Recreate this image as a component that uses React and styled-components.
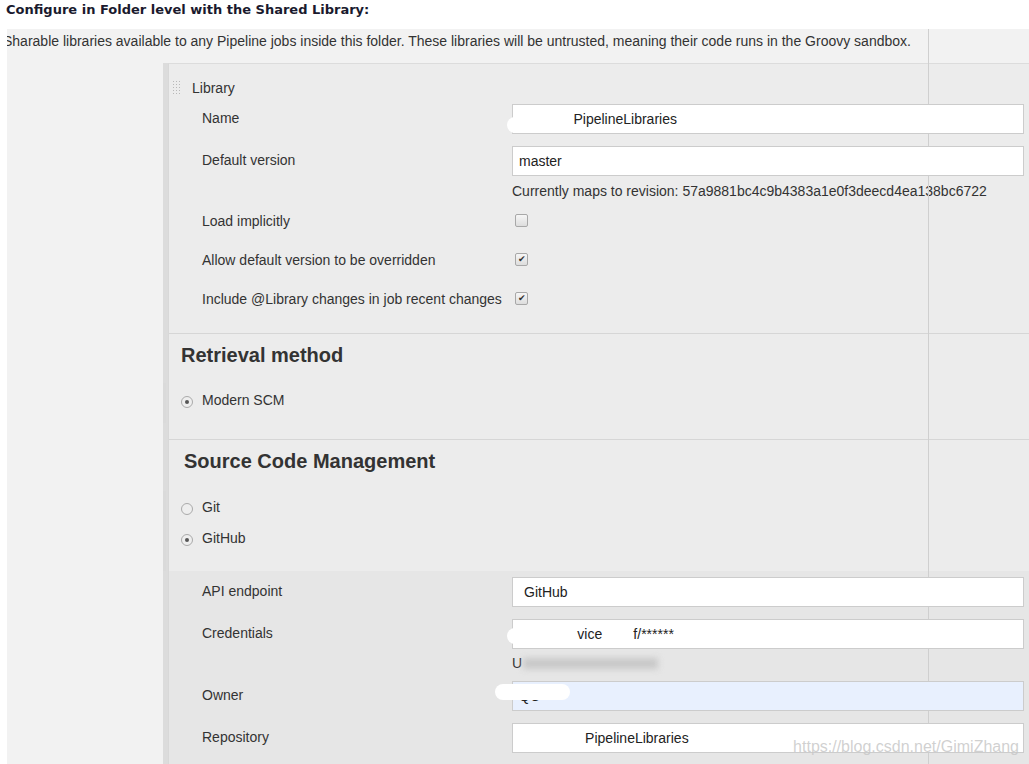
import React from 'react';
import styled, { createGlobalStyle } from 'styled-components';

const Global = createGlobalStyle`
  body { margin: 0; background: #fff; font-family: "Liberation Sans", Arial, sans-serif; color: #333; }
`;

const Title = styled.div`
  height: 29px;
  box-sizing: border-box;
  padding: 2px 0 0 6px;
  font: bold 13px "DejaVu Sans", Verdana, sans-serif;
  color: #1a1a2e;
`;

const Panel = styled.div`
  position: relative;
  margin-left: 7px;
  height: 735px;
  overflow: hidden;
  background: #f2f2f2;
`;

const Desc = styled.div`
  height: 34px;
  box-sizing: border-box;
  padding-top: 4px;
  margin-left: -4px;
  font-size: 14px;
  color: #333;
  white-space: nowrap;
`;

const VLine = styled.div`
  position: absolute;
  left: 921px;
  top: 0;
  bottom: 0;
  width: 1px;
  background: #cfcfcf;
`;

const Body = styled.div`
  display: flex;
  padding-left: 156px;
`;

const Bar = styled.div`
  width: 5px;
  background: #dcdcdc;
`;

const Inner = styled.div`
  flex: 1;
  background: #ececec;
  border-top: 1px solid #dcdcdc;
  border-left: 1px solid #d8d8d8;
  height: 700px;
`;

const LibHeader = styled.div`
  height: 40px;
  display: flex;
  align-items: center;
  gap: 11px;
  padding: 8px 0 0 3px;
  box-sizing: border-box;
  font-size: 14px;
`;

const Handle = styled.div`
  width: 9px;
  height: 16px;
  background-image: radial-gradient(circle, #b8b8b8 0.7px, transparent 0.8px);
  background-size: 3px 3px;
`;

const Row = styled.div`
  display: grid;
  grid-template-columns: 310px 1fr;
  align-items: ${p => (p.$center ? 'center' : 'start')};
  height: ${p => p.$h}px;
  padding: 0 5px 0 33px;
  font-size: 14px;
`;

const Label = styled.div`
  padding-top: ${p => (p.$top ? 6 : 0)}px;
`;

const Input = styled.div`
  position: relative;
  height: 30px;
  box-sizing: border-box;
  border: 1px solid #ccc;
  background: ${p => (p.$auto ? '#e8f0fe' : '#fff')};
  font-size: 14px;
  color: #222;
  padding: 0 0 0 ${p => p.$pad || 6}px;
  display: flex;
  align-items: center;
  white-space: pre;
`;

const Blob = styled.span`
  position: absolute;
  left: ${p => p.$x}px;
  top: ${p => p.$y}px;
  width: ${p => p.$w}px;
  height: 16px;
  border-radius: 8px;
  background: #fff;
`;

const Hint = styled.div`
  font-size: 14px;
  color: #333;
  display: flex;
  align-items: center;
  padding-top: ${p => p.$pt || 0}px;
`;

const Blur = styled.span`
  display: inline-block;
  width: 135px;
  height: 11px;
  margin-left: 1px;
  background: #c8c8c8;
  filter: blur(3px);
`;

const Check = styled.span`
  width: 11px;
  height: 11px;
  border: 1px solid #a8a8a8;
  border-radius: 2px;
  background: linear-gradient(#f6f6f6, #ddd);
  margin-left: 3px;
  font-size: 9px;
  line-height: 11px;
  text-align: center;
  color: #333;
`;

const Sep = styled.div`
  border-top: 1px solid #d6d6d6;
  margin-top: ${p => p.$mt}px;
`;

const Heading = styled.h2`
  margin: 0;
  height: ${p => p.$h}px;
  padding: 10px 0 0 ${p => p.$x}px;
  box-sizing: border-box;
  font: bold 20px "Liberation Sans", Arial, sans-serif;
  color: #333;
`;

const RadioBlock = styled.div`
  border-left: 3px solid #dadada;
  margin-left: -6px;
  padding: ${p => p.$pt}px 0 0 15px;
  height: ${p => p.$h}px;
  box-sizing: border-box;
  display: flex;
  flex-direction: column;
  gap: 13px;
`;

const RadioRow = styled.div`
  display: flex;
  align-items: center;
  gap: 9px;
  font-size: 14px;
  height: 18px;
`;

const Radio = styled.span`
  width: 10px;
  height: 10px;
  margin-top: 4px;
  border: 1px solid #aaa;
  border-radius: 50%;
  background: #eee;
  display: flex;
  align-items: center;
  justify-content: center;
  &::after {
    content: '';
    width: 4px;
    height: 4px;
    border-radius: 50%;
    background: ${p => (p.$on ? '#555' : 'transparent')};
  }
`;

const Nested = styled.div`
  background: #e6e6e6;
  padding-top: 6px;
  height: 200px;
`;

const Watermark = styled.div`
  position: absolute;
  right: 10px;
  bottom: 8px;
  font-size: 16px;
  color: rgba(200, 200, 200, 0.85);
`;

export default function App() {
  return (
    <>
      <Global />
      <Title>Configure in Folder level with the Shared Library:</Title>
      <Panel>
        <VLine />
        <Desc>Sharable libraries available to any Pipeline jobs inside this folder. These libraries will be untrusted, meaning their code runs in the Groovy sandbox.</Desc>
        <Body>
          <Bar />
          <Inner>
            <LibHeader><Handle />Library</LibHeader>
            <Row $h={42}>
              <Label $top>Name</Label>
              <Input><Blob $x={-6} $y={12} $w={28} />{'              PipelineLibraries'}</Input>
            </Row>
            <Row $h={30}>
              <Label $top>Default version</Label>
              <Input>master</Input>
            </Row>
            <Row $h={25}>
              <span />
              <Hint $pt={7}>Currently maps to revision: 57a9881bc4c9b4383a1e0f3deecd4ea138bc6722</Hint>
            </Row>
            <Row $h={39} $center><Label>Load implicitly</Label><Check /></Row>
            <Row $h={39} $center><Label>Allow default version to be overridden</Label><Check>✔</Check></Row>
            <Row $h={39} $center><Label>Include @Library changes in job recent changes</Label><Check>✔</Check></Row>
            <Sep $mt={15} />
            <Heading $h={49} $x={12}>Retrieval method</Heading>
            <RadioBlock $h={40} $pt={8}>
              <RadioRow><Radio $on />Modern SCM</RadioRow>
            </RadioBlock>
            <Sep $mt={16} />
            <Heading $h={51} $x={15}>Source Code Management</Heading>
            <RadioBlock $h={80} $pt={7}>
              <RadioRow><Radio />Git</RadioRow>
              <RadioRow><Radio $on />GitHub</RadioRow>
            </RadioBlock>
            <Nested>
              <Row $h={42}><Label $top>API endpoint</Label><Input $pad={11}>GitHub</Input></Row>
              <Row $h={30}><Label $top>Credentials</Label><Input><Blob $x={-6} $y={8} $w={60} />{'               vice        f/******'}</Input></Row>
              <Row $h={32}><span /><Hint $pt={6}>U<Blur /></Hint></Row>
              <Row $h={42}><Label $top>Owner</Label><Input $auto>QC<Blob $x={-18} $y={2} $w={75} /></Input></Row>
              <Row $h={30}><Label $top>Repository</Label><Input>{'                 PipelineLibraries'}</Input></Row>
            </Nested>
          </Inner>
        </Body>
        <Watermark>https://blog.csdn.net/GimiZhang</Watermark>
      </Panel>
    </>
  );
}
